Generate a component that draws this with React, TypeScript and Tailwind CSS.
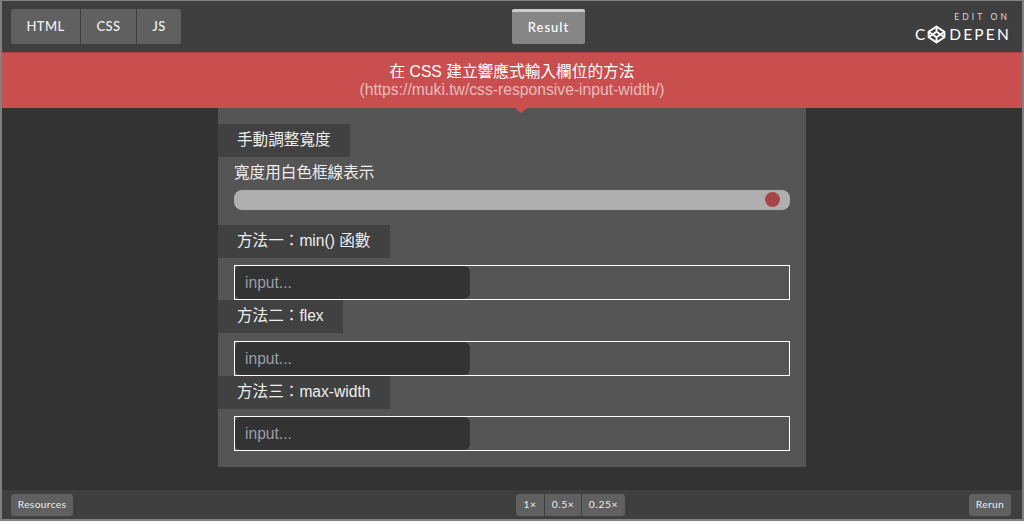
const CJK = "font-['Liberation_Sans','Noto_Sans_CJK_TC',sans-serif]";
const LATO = "font-['Lato','Noto_Sans',sans-serif]";

function Heading({ text, w }: { text: string; w: string }) {
  return (
    <div className={`${w} h-[33px] shrink-0 bg-[#414141] pl-[19px] text-[15.6px] leading-[32px] text-[#eeeeee]`}>
      {text}
    </div>
  );
}

function Field() {
  return (
    <div className="mx-4 mt-[7.4px] h-[35px] shrink-0 border border-white">
      <div className="flex h-[33px] w-[235px] items-center rounded-md bg-[#333333] pl-[10px] text-[15.6px] text-[#9a9ea5]">
        input...
      </div>
    </div>
  );
}

function Logo() {
  return (
    <svg width="19" height="19" viewBox="0 0 24 24" fill="none" stroke="#ffffff" strokeWidth="2.4" strokeLinejoin="round" className="mr-[3px]">
      <path d="M12 2 22 8.5v7L12 22 2 15.5v-7Z" />
      <path d="M12 2v6.5M12 15.5V22M2 8.5l10 7 10-7M2 15.5l10-7 10 7" />
    </svg>
  );
}

export default function App() {
  return (
    <div className="h-[524px] w-[1024px] bg-white">
      <div className={`flex h-[521px] flex-col border-x-2 border-t border-b-2 border-[#808080] bg-[#333333] ${CJK}`}>
        <header className={`flex h-[51px] shrink-0 items-start bg-[#3f3f3f] pt-[8px] pl-[9px] pr-[13px] ${LATO}`}>
          <div className="flex h-[35px] w-[170px] overflow-hidden rounded-[3px] bg-[#3f3f3f] text-[13px] font-medium tracking-[0.4px] text-[#f2f2f2]">
            <div className="flex w-[69px] items-center justify-center bg-[#606060]">HTML</div>
            <div className="ml-px flex w-[55px] items-center justify-center bg-[#606060]">CSS</div>
            <div className="ml-px flex flex-1 items-center justify-center bg-[#606060]">JS</div>
          </div>
          <div className="ml-[331px] flex h-[35px] w-[73px] items-center justify-center rounded-[2px] border-t-[3px] border-[#cccccc] bg-[#868686] text-[13px] font-medium tracking-[1px] text-white">
            Result
          </div>
          <div className="ml-auto flex flex-col items-end text-white">
            <div className="mr-[-1px] mt-[3px] text-[8.5px] leading-[11px] tracking-[3.1px] text-[#d8d8d8]">EDIT ON</div>
            <div className="mr-[-2px] mt-[1px] flex items-center text-[15.5px] leading-[20px] tracking-[1.8px]">
              <span>C</span>
              <Logo />
              <span className="tracking-[2.2px]">DEPEN</span>
            </div>
          </div>
        </header>

        <div className="relative z-10 flex h-[56px] shrink-0 flex-col items-center justify-center bg-[#c94f4f] text-center shadow-[inset_0_1px_0_rgba(0,0,0,0.15)]">
          <div className="text-[15.7px] leading-[19px] text-white">在 CSS 建立響應式輸入欄位的方法</div>
          <div className="text-[15.7px] leading-[17px] text-[#e6bcbc]">(https://muki.tw/css-responsive-input-width/)</div>
          <div className="absolute -bottom-[5px] left-1/2 ml-[9px] h-0 w-0 -translate-x-1/2 border-x-[6px] border-t-[5px] border-x-transparent border-t-[#c94f4f]" />
        </div>

        <main className="flex min-h-0 flex-1 justify-center">
          <div className="flex h-[359px] w-[588px] flex-col bg-[#555555]">
            <div className="mt-[15.5px] shrink-0">
              <Heading text="手動調整寬度" w="w-[132px]" />
            </div>
            <div className="mx-4 mt-[5px] text-[15.6px] leading-[22px] text-[#eeeeee]">寬度用白色框線表示</div>
            <div className="relative mx-4 mt-[6px] h-[20px] shrink-0 rounded-lg bg-[#afafaf]">
              <div className="absolute right-[10px] top-[2.5px] h-[15px] w-[15px] rounded-full bg-[#a64446]" />
            </div>
            <div className="mt-[15.5px]">
              <Heading text="方法一：min() 函數" w="w-[172px]" />
            </div>
            <Field />
            <Heading text="方法二：flex" w="w-[125px]" />
            <Field />
            <Heading text="方法三：max-width" w="w-[172px]" />
            <Field />
          </div>
        </main>

        <footer className={`flex h-[29px] shrink-0 items-center bg-[#3f3f3f] pl-[9px] pr-[11px] text-[10.3px] tracking-[0.3px] text-[#eeeeee] ${LATO}`}>
          <div className="flex h-[22px] w-[62px] items-center justify-center rounded-[3px] bg-[#606060]">Resources</div>
          <div className="ml-[443px] flex h-[22px] overflow-hidden rounded-[3px] tracking-[0.6px]">
            <div className="flex w-[28px] items-center justify-center bg-[#606060]">1×</div>
            <div className="ml-px flex w-[36px] items-center justify-center bg-[#606060]">0.5×</div>
            <div className="ml-px flex w-[43px] items-center justify-center bg-[#606060]">0.25×</div>
          </div>
          <div className="ml-auto flex h-[22px] w-[42px] items-center justify-center rounded-[3px] bg-[#606060]">Rerun</div>
        </footer>
      </div>
    </div>
  );
}
